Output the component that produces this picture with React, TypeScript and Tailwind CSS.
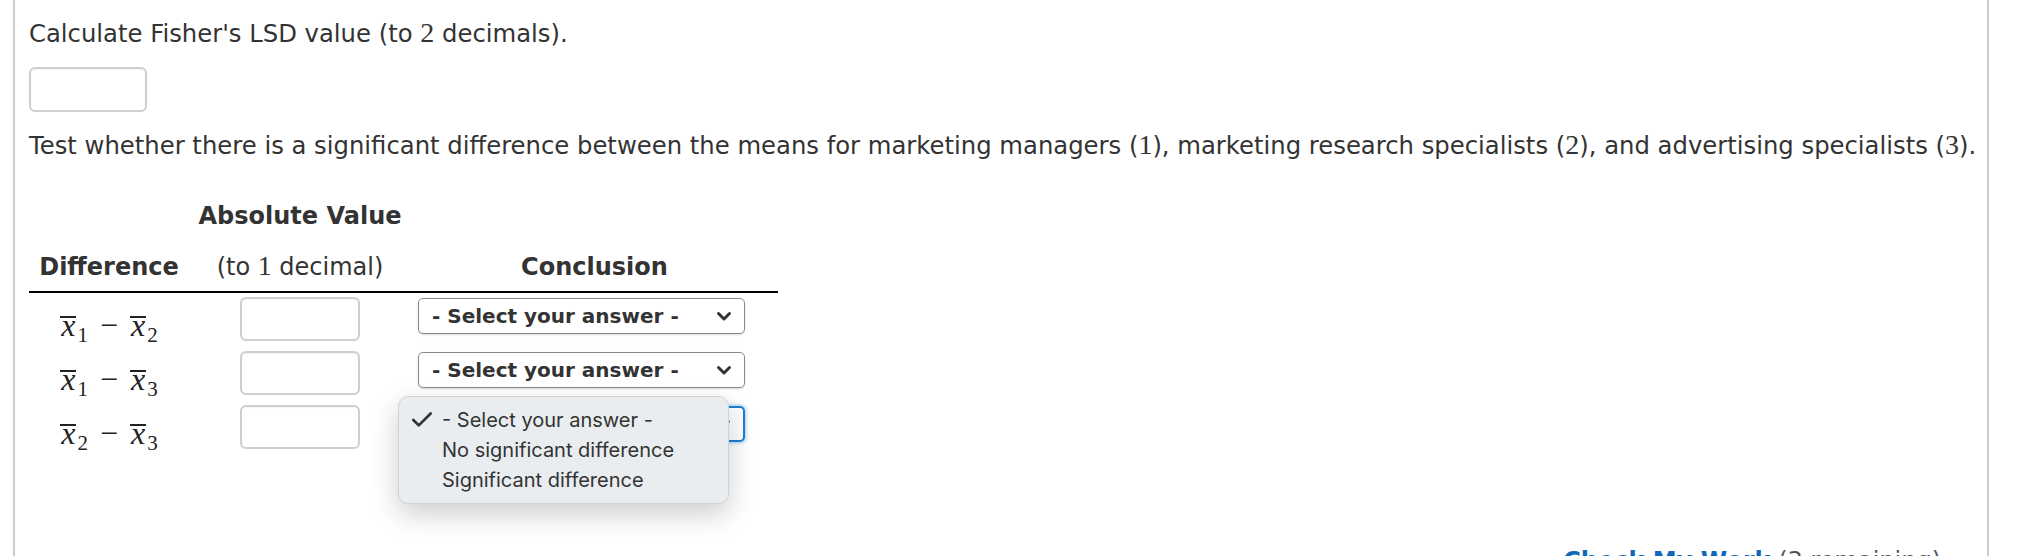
import { Check } from 'lucide-react';

const XBar = ({ n }: { n: number }) => (
  <span className="inline-flex items-baseline">
    <span className="inline-block border-t-[2.5px] border-[#222] px-[1px] italic leading-[14px]">
      x
    </span>
    <span className="relative top-[6px] ml-[1px] text-[21px] not-italic">
      {n}
    </span>
  </span>
);

const Diff = ({ a, b }: { a: number; b: number }) => (
  <span className="inline-flex items-baseline gap-[12px] font-['Liberation_Serif',serif] text-[32px] leading-none text-[#222]">
    <XBar n={a} />
    <span>−</span>
    <XBar n={b} />
  </span>
);

const Num = ({ children }: { children: string }) => (
  <span className="font-['Liberation_Serif',serif] text-[28px]">{children}</span>
);

const Chevron = ({ className }: { className?: string }) => (
  <svg
    width="16"
    height="11"
    viewBox="0 0 16 11"
    fill="none"
    className={className}
  >
    <path
      d="M2.5 2.5 L8 8 L13.5 2.5"
      stroke="currentColor"
      strokeWidth="3"
      strokeLinecap="round"
      strokeLinejoin="round"
    />
  </svg>
);

const AnswerSelect = ({ focused }: { focused?: boolean }) => (
  <div
    className={
      focused
        ? 'flex h-[36px] w-[327px] items-center justify-between rounded-[5px] border-2 border-[#1c7fd6] bg-white pl-[13px] pr-[12px] shadow-[0_0_4px_rgba(28,127,214,0.6)]'
        : 'flex h-[36px] w-[327px] items-center justify-between rounded-[5px] border-[1.5px] border-[#8a8a8a] bg-white pl-[13px] pr-[12px] shadow-[0_1px_2px_rgba(0,0,0,0.15)]'
    }
  >
    <span className="text-[20px] font-bold text-[#333]">
      - Select your answer -
    </span>
    <Chevron className={focused ? 'text-[#1c7fd6]' : 'text-[#333]'} />
  </div>
);

const AnswerBox = ({ className }: { className: string }) => (
  <div
    className={`rounded-[6px] border-2 border-[#cfcfcf] bg-white shadow-[inset_0_1px_1px_rgba(0,0,0,0.05)] ${className}`}
  />
);

const DropdownMenu = () => (
  <div className="absolute left-[-20px] top-[-10px] z-10 w-[331px] rounded-[10px] border border-[#cfd3d6] bg-[#e9edf0] py-[8px] font-['Inter','Noto_Sans',sans-serif] text-[20px] text-[#333] shadow-[0_10px_28px_rgba(0,0,0,0.2)]">
    <div className="flex h-[30px] items-center">
      <span className="flex w-[43px] justify-center pl-[2px]">
        <Check size={26} strokeWidth={2.5} />
      </span>
      <span>- Select your answer -</span>
    </div>
    <div className="flex h-[30px] items-center pl-[43px]">
      No significant difference
    </div>
    <div className="flex h-[30px] items-center pl-[43px]">
      Significant difference
    </div>
  </div>
);

const rows = [
  { a: 1, b: 2 },
  { a: 1, b: 3 },
  { a: 2, b: 3 },
];

export default function App() {
  return (
    <div className="h-[556px] w-[2040px] overflow-hidden bg-white font-['DejaVu_Sans',sans-serif] text-[#333]">
      <div className="ml-[13px] mr-[51px] flex h-full flex-col border-x-2 border-[#cccccc] pl-[14px]">
        <p className="mt-[17px] text-[24.3px] leading-[32px]">
          Calculate Fisher's LSD value (to <Num>2</Num> decimals).
        </p>

        <AnswerBox className="mt-[17px] h-[45px] w-[118px]" />

        <p className="mt-[17px] whitespace-nowrap text-[24.3px] leading-[32px]">
          Test whether there is a significant difference between the means for
          marketing managers (<Num>1</Num>), marketing research specialists (
          <Num>2</Num>), and advertising specialists (<Num>3</Num>).
        </p>

        <div className="mt-[38px] w-[749px]">
          <div className="grid grid-cols-[160px_222px_367px] items-end">
            <div />
            <div className="whitespace-nowrap text-center text-[24px] font-bold leading-[32px]">
              Absolute Value
            </div>
            <div />
          </div>
          <div className="mt-[18px] grid grid-cols-[160px_222px_367px] items-center border-b-2 border-black pb-[8px]">
            <div className="text-center text-[24px] font-bold leading-[32px]">
              Difference
            </div>
            <div className="whitespace-nowrap text-center text-[24px] leading-[32px]">
              (to <Num>1</Num> decimal)
            </div>
            <div className="text-center text-[24px] font-bold leading-[32px]">
              Conclusion
            </div>
          </div>

          <div className="mt-[4px] flex flex-col gap-[10px]">
            {rows.map((row, index) => (
              <div
                key={`${row.a}-${row.b}`}
                className="grid h-[44px] grid-cols-[160px_222px_367px] grid-rows-[44px] items-center"
              >
                <div className="flex h-[44px] items-center justify-center pt-[12px]">
                  <Diff a={row.a} b={row.b} />
                </div>
                <div className="flex justify-center">
                  <AnswerBox className="h-[44px] w-[120px]" />
                </div>
                <div className="flex self-start pl-[7px] pt-[1px]">
                  <div className="relative">
                    <AnswerSelect focused={index === 2} />
                    {index === 2 && <DropdownMenu />}
                  </div>
                </div>
              </div>
            ))}
          </div>
        </div>

        <div className="mt-auto flex justify-end pr-[46px]">
          <p className="translate-y-[21px] text-[24px] leading-[32px]">
            <span className="font-bold text-[#1068b8]">Check My Work</span>{' '}
            <span className="text-[#555]">(3 remaining)</span>
          </p>
        </div>
      </div>
    </div>
  );
}
